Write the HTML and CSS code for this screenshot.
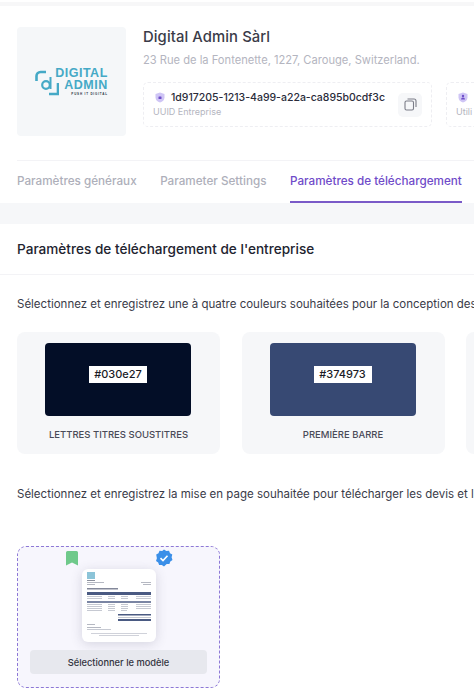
FILE: index.html
```html
<!DOCTYPE html>
<html lang="fr">
<head>
    <meta charset="UTF-8">
    <meta name="viewport" content="width=device-width, initial-scale=1.0">
    <title>Paramètres de téléchargement</title>
    <link rel="stylesheet" href="styles.css">
</head>
<body>
    <div class="top-band"></div>

    <section class="company">
        <div class="logo-box">
            <svg class="logo-mark" width="24" height="26" viewBox="0 0 24 26" fill="none">
                <path d="M1.500 11V6a4 4 0 0 1 4-4h5.500" stroke="#45a9c6" stroke-width="2.600"/>
                <circle cx="11" cy="15" r="3.800" stroke="#45a9c6" stroke-width="2.200"/>
                <path d="M15.500 7v12" stroke="#45a9c6" stroke-width="2"/>
                <path d="M23 13v11H14" stroke="#45a9c6" stroke-width="2.600"/>
            </svg>
            <div class="logo-text">
                <span class="logo-line">DIGITAL</span>
                <span class="logo-line">ADMIN</span>
                <span class="logo-small">PUSH IT DIGITAL</span>
            </div>
        </div>
        <div class="company-info">
            <h1 class="company-name">Digital Admin Sàrl</h1>
            <p class="company-address">23 Rue de la Fontenette, 1227, Carouge, Switzerland.</p>
            <div class="id-row">
                <div class="id-box">
                    <div class="id-text">
                        <div class="id-value">
                            <svg class="shield" width="10" height="11" viewBox="0 0 10 11">
                                <path d="M5 0.500L9.500 2v3.500c0 2.500-2 4.200-4.500 5-2.500-.8-4.500-2.500-4.500-5V2z" fill="#cfc5f5"/>
                                <rect x="3.500" y="4.500" width="3" height="2.500" rx=".5" fill="#6f4fc9"/>
                            </svg>
                            <span>1d917205-1213-4a99-a22a-ca895b0cdf3c</span>
                        </div>
                        <div class="id-label">UUID Entreprise</div>
                    </div>
                    <div class="copy-btn">
                        <svg width="13" height="13" viewBox="0 0 13 13" fill="none" stroke="#7b7d88" stroke-width="1.100">
                            <rect x="1" y="3" width="8.500" height="9" rx="1.500"/>
                            <path d="M3.500 1h6.500a2 2 0 0 1 2 2v6"/>
                        </svg>
                    </div>
                </div>
                <div class="id-box id-box-cut">
                    <div class="id-text">
                        <div class="id-value">
                            <svg class="shield" width="10" height="11" viewBox="0 0 10 11">
                                <path d="M5 0.500L9.500 2v3.500c0 2.500-2 4.200-4.500 5-2.500-.8-4.500-2.500-4.500-5V2z" fill="#cfc5f5"/>
                                <circle cx="5" cy="4" r="1.200" fill="#6f4fc9"/>
                                <path d="M3 7.500a2 2 0 0 1 4 0z" fill="#6f4fc9"/>
                            </svg>
                        </div>
                        <div class="id-label">Utili</div>
                    </div>
                </div>
            </div>
        </div>
    </section>

    <nav class="tabs">
        <a class="tab">Paramètres généraux</a>
        <a class="tab">Parameter Settings</a>
        <a class="tab tab-active">Paramètres de téléchargement</a>
    </nav>

    <div class="band"></div>

    <h2 class="section-title">Paramètres de téléchargement de l'entreprise</h2>

    <section class="section-body">
        <p class="hint">Sélectionnez et enregistrez une à quatre couleurs souhaitées pour la conception des</p>

        <div class="colors">
            <div class="color-card">
                <div class="swatch swatch-dark"><span class="hex">#030e27</span></div>
                <div class="color-label">LETTRES TITRES SOUSTITRES</div>
            </div>
            <div class="color-card">
                <div class="swatch swatch-blue"><span class="hex">#374973</span></div>
                <div class="color-label">PREMIÈRE BARRE</div>
            </div>
            <div class="color-card"></div>
        </div>

        <p class="hint hint-layout">Sélectionnez et enregistrez la mise en page souhaitée pour télécharger les devis et l</p>

        <div class="template-card">
            <svg class="bookmark" width="12" height="15" viewBox="0 0 12 15">
                <path d="M1.500 0h9A1.500 1.500 0 0 1 12 1.500V14.500L6 11.500 0 14.500V1.500A1.500 1.500 0 0 1 1.500 0z" fill="#6fc98b"/>
            </svg>
            <svg class="verified" width="18" height="18" viewBox="0 0 18 18">
                <path d="M9 .5l2.300 1.500 2.700-.3 1 2.500 2.300 1.400-.7 2.700.9 2.600-2.200 1.600-.9 2.600-2.700 0L9 17.500l-2.200-1.400-2.700 0-.9-2.600-2.200-1.600.9-2.600L1.200 5.600 3.500 4.200l1-2.500 2.700.3z" fill="#3b8fe8"/>
                <path d="M5.500 9.200l2.500 2.400 4.500-4.800" fill="none" stroke="#fff" stroke-width="1.600"/>
            </svg>
            <div class="doc">
                <svg width="74" height="73" viewBox="0 0 74 73">
                    <rect x="5" y="3" width="8" height="7" fill="#8cc4d8"/>
                    <rect x="5" y="11" width="8" height="1" fill="#8b8f9c"/>
                    <rect x="5" y="13" width="17" height="1" fill="#b5b8c2"/>
                    <rect x="5" y="15" width="8" height="1" fill="#b5b8c2"/>
                    <rect x="59" y="13" width="10" height="1" fill="#b5b8c2"/>
                    <rect x="61" y="15" width="8" height="1" fill="#b5b8c2"/>
                    <rect x="5" y="19" width="31" height="1.500" fill="#83889a"/>
                    <rect x="5" y="23" width="64" height="3" fill="#4a5a82"/>
                    <rect x="5" y="27" width="64" height="1" fill="#c6c9d2"/>
                    <rect x="5" y="29" width="64" height="1" fill="#c6c9d2"/>
                    <rect x="5" y="32" width="64" height="2" fill="#7a85a3"/>
                    <rect x="5" y="35" width="64" height="1" fill="#c6c9d2"/>
                    <rect x="5" y="37" width="64" height="1" fill="#c6c9d2"/>
                    <rect x="5" y="39" width="64" height="1" fill="#c6c9d2"/>
                    <rect x="5" y="41" width="40" height="1" fill="#c6c9d2"/>
                    <rect x="20" y="27" width="6" height="3" fill="#fff"/>
                    <rect x="33" y="27" width="6" height="3" fill="#fff"/>
                    <rect x="46" y="27" width="8" height="3" fill="#fff"/>
                    <rect x="20" y="35" width="6" height="7" fill="#fff"/>
                    <rect x="33" y="35" width="6" height="7" fill="#fff"/>
                    <rect x="46" y="35" width="8" height="7" fill="#fff"/>
                    <rect x="36" y="45" width="33" height="1.500" fill="#4a5a82"/>
                    <rect x="36" y="48" width="33" height="1" fill="#c6c9d2"/>
                    <rect x="36" y="50" width="33" height="2" fill="#4a5a82"/>
                    <rect x="5" y="55" width="8" height="1" fill="#b5b8c2"/>
                    <rect x="5" y="58" width="14" height="1" fill="#b5b8c2"/>
                    <rect x="5" y="60" width="24" height="1" fill="#c6c9d2"/>
                    <rect x="9" y="64" width="56" height="1" fill="#d0d2da"/>
                    <rect x="17" y="66" width="40" height="1" fill="#d0d2da"/>
                </svg>
            </div>
            <button class="select-btn">Sélectionner le modèle</button>
        </div>
    </section>
</body>
</html>
```

FILE: styles.css
```css
html, body {
    margin: 0;
    padding: 0;
    width: 474px;
    height: 697px;
    overflow: hidden;
}
body {
    font-family: "Inter", "Liberation Sans", sans-serif;
    background-color: #fff;
    color: #1f2130;
}
p, h1, h2 {
    margin: 0;
    font-weight: normal;
}
.top-band {
    height: 4px;
    margin-top: 2px;
    background-color: #f7f7f8;
}

/* company header */
.company {
    display: flex;
    gap: 17px;
    margin: 21px 0 0 17px;
    height: 133px;
    border-bottom: 1px solid #f3f3f6;
}
.logo-box {
    flex: none;
    display: flex;
    align-items: center;
    justify-content: center;
    width: 109px;
    height: 109px;
    background-color: #f5f7f9;
    border-radius: 4px;
}
.logo-mark {
    margin-top: 2px;
}
.logo-text {
    display: flex;
    flex-direction: column;
    align-items: flex-end;
    margin-left: -4px;
    margin-top: -1px;
    color: #45a9c6;
    font-family: "Liberation Sans", sans-serif;
    font-weight: bold;
    font-size: 12.500px;
    line-height: 12.500px;
    letter-spacing: 0.500px;
}
.logo-small {
    font-size: 3px;
    line-height: 4px;
    letter-spacing: 0.800px;
    color: #2d3748;
}
.company-info {
    flex: none;
    width: 400px;
}
.company-name {
    margin-top: 1px;
    font-size: 14.800px;
    line-height: 18px;
    font-weight: 500;
    color: #3a3b48;
    letter-spacing: 0.100px;
}
.company-address {
    margin-top: 6px;
    font-size: 11.150px;
    line-height: 16px;
    color: #b4b5c0;
}
.id-row {
    display: flex;
    gap: 14px;
    margin-top: 14px;
}
.id-box {
    flex: none;
    box-sizing: border-box;
    display: flex;
    align-items: center;
    justify-content: space-between;
    width: 289px;
    height: 45px;
    padding: 0 9px;
    border: 1px dashed #eeeef2;
    border-radius: 5px;
}
.id-box-cut {
    width: 120px;
}
.id-value {
    display: flex;
    align-items: center;
    gap: 6px;
    height: 14px;
    margin-left: 2px;
    font-size: 10.500px;
    font-weight: 500;
    color: #2a2b3a;
    white-space: nowrap;
}
.shield {
    flex: none;
}
.id-label {
    margin-top: 1px;
    font-size: 9px;
    line-height: 14px;
    color: #b4b5c0;
}
.copy-btn {
    display: flex;
    align-items: center;
    justify-content: center;
    width: 24px;
    height: 24px;
    background-color: #f6f7f9;
    border-radius: 5px;
}

/* tabs */
.tabs {
    display: flex;
    gap: 23.500px;
    height: 42px;
    padding-left: 17px;
    white-space: nowrap;
}
.tab {
    box-sizing: border-box;
    height: 42px;
    padding-top: 13px;
    font-size: 11.700px;
    line-height: 15px;
    font-weight: 500;
    color: #aeafba;
}
.tab-active {
    width: 172px;
    color: #6f4bc9;
    border-bottom: 2px solid #7a5ac8;
}
.band {
    height: 21px;
    background-color: #f6f7f9;
}

.section-title {
    box-sizing: border-box;
    height: 51px;
    padding: 17px 0 0 17px;
    font-size: 13.600px;
    line-height: 16px;
    font-weight: 500;
    color: #22232f;
    border-bottom: 1px solid #f3f3f6;
}

.section-body {
    padding: 21px 0 0 17px;
}
.hint {
    font-size: 11.500px;
    line-height: 16px;
    color: #3a3b48;
    white-space: nowrap;
}

/* colour cards */
.colors {
    display: flex;
    gap: 21.500px;
    margin-top: 20px;
}
.color-card {
    flex: none;
    box-sizing: border-box;
    width: 203px;
    height: 122px;
    padding-top: 11px;
    background-color: #f6f7f9;
    border-radius: 8px;
}
.swatch {
    display: flex;
    align-items: flex-start;
    justify-content: center;
    width: 146px;
    height: 73px;
    margin-left: 28px;
    border-radius: 4px;
}
.swatch-dark {
    background-color: #030e27;
}
.swatch-blue {
    background-color: #374973;
}
.hex {
    box-sizing: border-box;
    width: 58px;
    height: 17px;
    margin-top: 23px;
    background-color: #fff;
    color: #1a1b26;
    font-size: 11px;
    line-height: 17px;
    font-weight: 500;
    text-align: center;
}
.color-label {
    margin-top: 12px;
    font-size: 9.500px;
    line-height: 14px;
    font-weight: 500;
    color: #4a4b58;
    text-align: center;
}
.hint-layout {
    margin-top: 32px;
}

/* template card */
.template-card {
    position: relative;
    box-sizing: border-box;
    display: flex;
    flex-direction: column;
    align-items: center;
    width: 203px;
    height: 142px;
    margin-top: 44px;
    padding-top: 22px;
    background-color: #f7f6fd;
    border: 1px dashed #8d78d6;
    border-radius: 9px;
}
.bookmark {
    position: absolute;
    top: 4px;
    left: 48px;
}
.verified {
    position: absolute;
    top: 2px;
    left: 137px;
}
.doc {
    width: 74px;
    height: 73px;
    background-color: #fff;
    border-radius: 6px;
    box-shadow: 0 2px 12px rgba(60, 60, 90, 0.18);
}
.doc svg {
    display: block;
}
.select-btn {
    width: 177px;
    height: 24px;
    margin-top: 8px;
    padding: 0;
    border: none;
    border-radius: 4px;
    background-color: #e7e8ee;
    color: #33343f;
    font-family: inherit;
    font-size: 9.300px;
    font-weight: 500;
}
```
